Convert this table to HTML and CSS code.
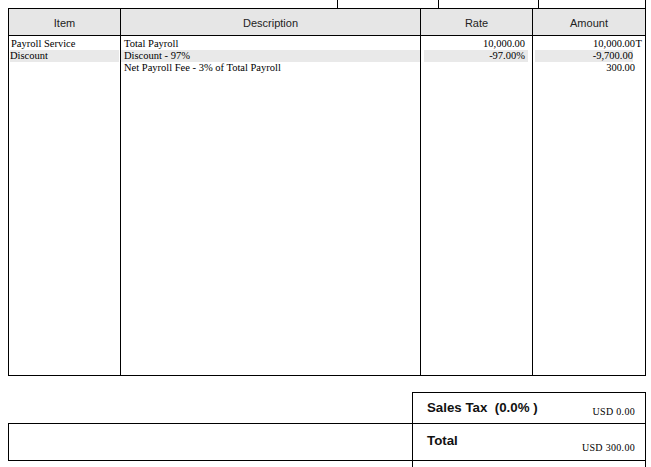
FILE: index.html
```html
<!DOCTYPE html>
<html>
<head>
<meta charset="utf-8">
<link rel="stylesheet" href="styles.css">
</head>
<body>
<div class="frag">
  <div class="frag-cell w1"></div>
  <div class="frag-cell w2"></div>
  <div class="frag-cell w3"></div>
</div>

<div class="items">
  <div class="hd">Item</div>
  <div class="hd col">Description</div>
  <div class="hd col">Rate</div>
  <div class="hd col">Amount</div>

  <div class="cell first">Payroll Service</div>
  <div class="cell col first desc">Total Payroll</div>
  <div class="cell col first rate">10,000.00</div>
  <div class="cell col first amt">10,000.00<span class="flag">T</span></div>

  <div class="cell"><div class="band b-item">Discount</div></div>
  <div class="cell col desc"><div class="band b-desc">Discount - 97%</div></div>
  <div class="cell col rate"><div class="band b-rate">-97.00%</div></div>
  <div class="cell col amt"><div class="band b-amt">-9,700.00</div></div>

  <div class="cell"></div>
  <div class="cell col desc">Net Payroll Fee - 3% of Total Payroll</div>
  <div class="cell col rate"></div>
  <div class="cell col amt">300.00<span class="flag"></span></div>

  <div class="cell"></div>
  <div class="cell col"></div>
  <div class="cell col"></div>
  <div class="cell col"></div>
</div>

<div class="summary">
  <div class="s-empty"></div>
  <div class="s-right r1">
    <span class="s-label">Sales Tax  (0.0% )</span>
    <span class="s-amt a1">USD 0.00</span>
  </div>
  <div class="s-left"></div>
  <div class="s-right r2">
    <span class="s-label">Total</span>
    <span class="s-amt a2">USD 300.00</span>
  </div>
  <div class="s-tail"></div>
  <div class="s-right r3"></div>
</div>
</body>
</html>
```

FILE: styles.css
```css
html, body {
  margin: 0;
  padding: 0;
  background: #fff;
}
body {
  padding-left: 8px;
  font-family: "Liberation Serif", "Times New Roman", serif;
  color: #000;
}

/* fragment of the table above */
.frag {
  display: flex;
  height: 8px;
  margin-left: 329px;
  width: 309px;
}
.frag-cell {
  box-sizing: border-box;
  border-left: 1px solid #000;
  height: 8px;
}
.w1 { width: 101px; }
.w2 { width: 100px; }
.w3 { width: 108px; border-right: 1px solid #000; }

/* items table */
.items {
  box-sizing: border-box;
  width: 638px;
  height: 368px;
  border: 1px solid #000;
  display: grid;
  grid-template-columns: 111px 300px 112px 113px;
  grid-template-rows: 27px 14px 12px 12px 1fr;
}
.hd {
  box-sizing: border-box;
  background: #e6e6e6;
  border-bottom: 1px solid #000;
  font-family: "Liberation Sans", Arial, sans-serif;
  font-size: 11px;
  color: #222;
  display: flex;
  align-items: center;
  justify-content: center;
  padding-top: 1px;
}
.col {
  border-left: 1px solid #000;
}
.cell {
  box-sizing: border-box;
  font-size: 10.5px;
  line-height: 12px;
  padding-left: 2px;
  white-space: nowrap;
}
.cell.first {
  padding-top: 2px;
}
.cell.desc {
  padding-left: 3px;
}
.cell.rate {
  text-align: right;
  padding-right: 7px;
}
.cell.amt {
  text-align: right;
  padding-right: 3px;
}
.flag {
  display: inline-block;
  width: 7px;
  text-align: right;
}
.band {
  background: #e9e9e9;
  height: 12px;
}
.b-item { margin-left: -1px; margin-right: 1px; }
.b-desc { margin-left: -3px; padding-left: 3px; }
.cell.rate .band { margin-left: 1px; margin-right: -3px; padding-right: 3px; }
.cell.amt .band { margin-right: 9px; padding-right: 0; }
.cell.amt .b-amt { text-align: right; }

/* summary */
.summary {
  margin-top: 16px;
  display: grid;
  grid-template-columns: 404px 234px;
  grid-template-rows: 31px 37px 20px;
}
.s-right {
  box-sizing: border-box;
  border-top: 1px solid #000;
  border-left: 1px solid #000;
  border-right: 1px solid #000;
  display: flex;
  justify-content: space-between;
  align-items: flex-start;
  padding-left: 14px;
  padding-right: 10px;
}
.s-left {
  box-sizing: border-box;
  border-top: 1px solid #000;
  border-left: 1px solid #000;
}
.s-tail {
  box-sizing: border-box;
  border-top: 1px solid #000;
}
.r1 { padding-top: 7px; }
.r2 { padding-top: 9px; }
.s-label {
  font-family: "Liberation Sans", Arial, sans-serif;
  font-weight: bold;
  font-size: 13.3px;
  line-height: 15px;
  white-space: pre;
  color: #111;
}
.s-amt {
  font-family: "Liberation Serif", "Times New Roman", serif;
  font-size: 10px;
  line-height: 12px;
  letter-spacing: 0.3px;
  white-space: nowrap;
}
.a1 { margin-top: 6px; }
.a2 { margin-top: 9px; }
```
